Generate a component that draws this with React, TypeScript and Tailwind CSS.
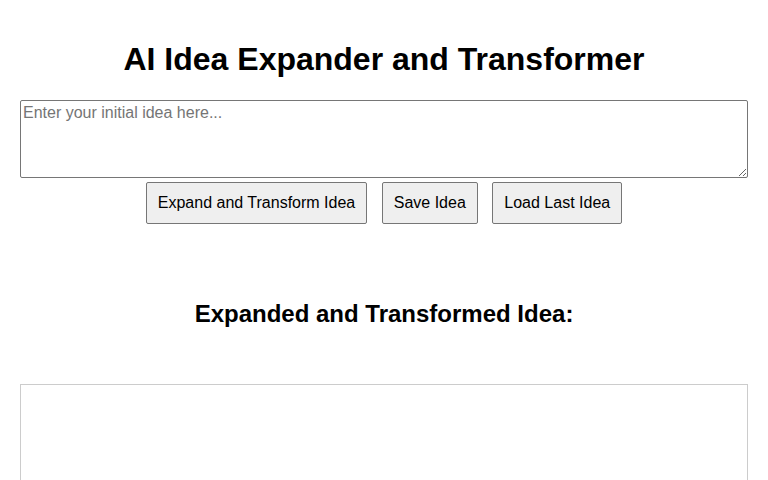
export default function App() {
  return (
    <div
      className="min-h-screen bg-white px-5 pt-[41px] text-black"
      style={{ fontFamily: '"Liberation Sans", Arial, sans-serif' }}
    >
      <h1 className="text-center text-[32px] font-bold leading-[37px]">
        AI Idea Expander and Transformer
      </h1>

      <textarea
        rows={4}
        placeholder="Enter your initial idea here..."
        className="mt-[22px] block h-[78px] w-full rounded-[2px] border border-[#767676] px-[2px] pt-[2px] pb-0 text-[16px] leading-[19px] placeholder:text-[#757575]"
      />

      <div className="mt-1 flex justify-center gap-[14.5px]">
        <button className="h-[42px] rounded-[2px] border border-[#767676] bg-[#efefef] px-[11px] text-[16px]">
          Expand and Transform Idea
        </button>
        <button className="h-[42px] rounded-[2px] border border-[#767676] bg-[#efefef] px-[11px] text-[16px]">
          Save Idea
        </button>
        <button className="h-[42px] rounded-[2px] border border-[#767676] bg-[#efefef] px-[11px] text-[16px]">
          Load Last Idea
        </button>
      </div>

      <h2 className="mt-[76px] text-center text-[24px] font-bold leading-[28px]">
        Expanded and Transformed Idea:
      </h2>

      <div className="mt-[56px] min-h-[200px] w-full border border-[#cccccc] p-[10px]"></div>
    </div>
  );
}
